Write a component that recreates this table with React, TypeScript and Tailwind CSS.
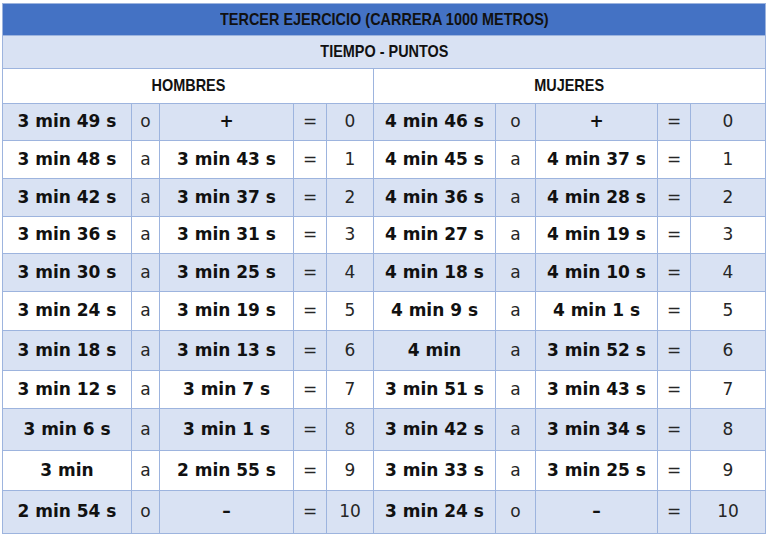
import React from 'react';

type Row = [string, string, string, string, string, string, string, string];

const rows: Row[] = [
  ['3 min 49 s', 'o', '+', '0', '4 min 46 s', 'o', '+', '0'],
  ['3 min 48 s', 'a', '3 min 43 s', '1', '4 min 45 s', 'a', '4 min 37 s', '1'],
  ['3 min 42 s', 'a', '3 min 37 s', '2', '4 min 36 s', 'a', '4 min 28 s', '2'],
  ['3 min 36 s', 'a', '3 min 31 s', '3', '4 min 27 s', 'a', '4 min 19 s', '3'],
  ['3 min 30 s', 'a', '3 min 25 s', '4', '4 min 18 s', 'a', '4 min 10 s', '4'],
  ['3 min 24 s', 'a', '3 min 19 s', '5', '4 min 9 s', 'a', '4 min 1 s', '5'],
  ['3 min 18 s', 'a', '3 min 13 s', '6', '4 min', 'a', '3 min 52 s', '6'],
  ['3 min 12 s', 'a', '3 min 7 s', '7', '3 min 51 s', 'a', '3 min 43 s', '7'],
  ['3 min 6 s', 'a', '3 min 1 s', '8', '3 min 42 s', 'a', '3 min 34 s', '8'],
  ['3 min', 'a', '2 min 55 s', '9', '3 min 33 s', 'a', '3 min 25 s', '9'],
  ['2 min 54 s', 'o', '–', '10', '3 min 24 s', 'o', '–', '10'],
];

const heights = ['h-[37px]', 'h-[38px]', 'h-[38px]', 'h-[37px]', 'h-[38px]', 'h-[39px]', 'h-[40px]', 'h-[38px]', 'h-[42px]', 'h-[40px]', 'h-[43px]'];

const cell = 'border border-[#9db4de] text-center p-0';
const bold = `${cell} font-bold text-[17px] text-[#111]`;
const plain = `${cell} text-[17px]`;
const head = "border border-[#9db4de] text-center p-0 font-bold text-[17px] font-['Liberation_Sans',sans-serif] text-[#111]";

function HeadText({ children }: { children: React.ReactNode }) {
  return <span className="inline-block scale-x-[0.85] whitespace-nowrap">{children}</span>;
}

function Half({ r }: { r: string[] }) {
  return (
    <>
      <td className={bold}>{r[0]}</td>
      <td className={plain}>{r[1]}</td>
      <td className={bold}>{r[2]}</td>
      <td className={plain}>=</td>
      <td className={plain}>{r[3]}</td>
    </>
  );
}

export default function App() {
  return (
    <div className="w-[768px] h-[539px] bg-white pt-[3px] pl-[2px]">
      <table className="border-collapse table-fixed w-[763px] text-[#262626] font-['DejaVu_Sans',sans-serif]">
        <colgroup>
          <col className="w-[129px]" />
          <col className="w-[28px]" />
          <col className="w-[134px]" />
          <col className="w-[33px]" />
          <col className="w-[47px]" />
          <col className="w-[122px]" />
          <col className="w-[40px]" />
          <col className="w-[122px]" />
          <col className="w-[33px]" />
          <col className="w-[75px]" />
        </colgroup>
        <tbody>
          <tr className="h-[32px] bg-[#4472c4]">
            <td colSpan={10} className={head}><HeadText>TERCER EJERCICIO (CARRERA 1000 METROS)</HeadText></td>
          </tr>
          <tr className="h-[33px] bg-[#d9e2f3]">
            <td colSpan={10} className={head}><HeadText>TIEMPO - PUNTOS</HeadText></td>
          </tr>
          <tr className="h-[35px] bg-white">
            <td colSpan={5} className={head}><HeadText>HOMBRES</HeadText></td>
            <td colSpan={5} className={head}><HeadText>MUJERES</HeadText></td>
          </tr>
          {rows.map((r, i) => (
            <tr key={i} className={`${heights[i]} ${i % 2 === 0 ? 'bg-[#d9e2f3]' : 'bg-white'}`}>
              <Half r={[r[0], r[1], r[2], r[3]]} />
              <Half r={[r[4], r[5], r[6], r[7]]} />
            </tr>
          ))}
        </tbody>
      </table>
    </div>
  );
}
